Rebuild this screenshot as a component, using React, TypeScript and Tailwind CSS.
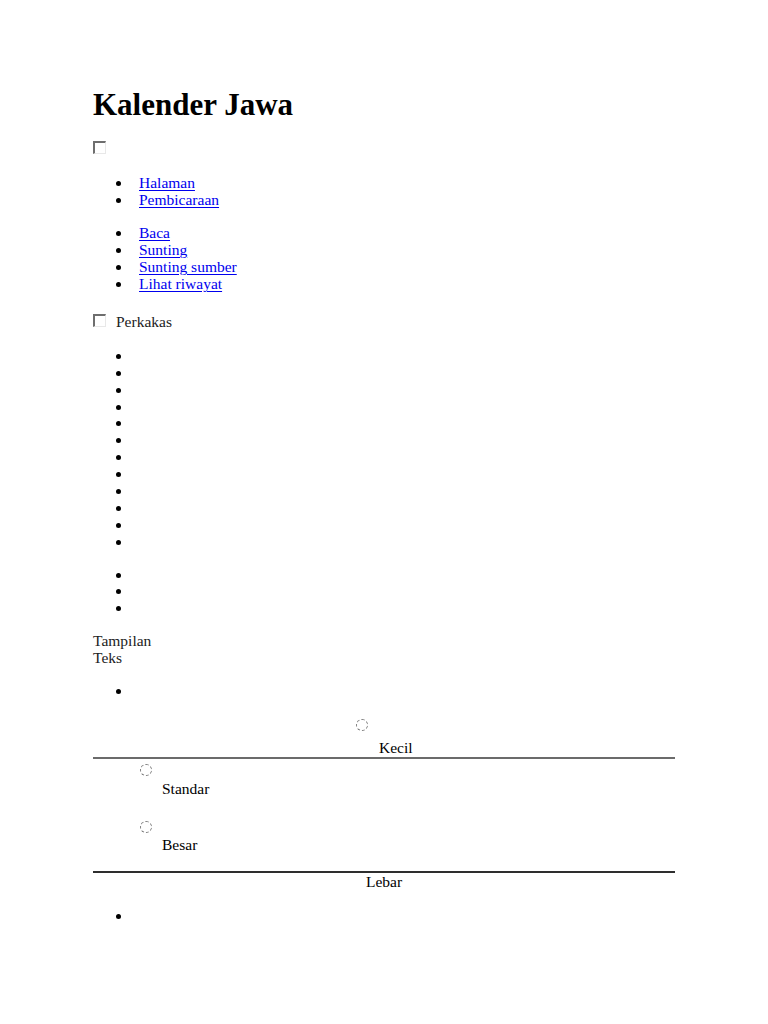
import React from "react";

const Bullet = ({ children }: { children?: React.ReactNode }) => (
  <li className="flex items-center h-[16.9px] leading-[16.9px]">
    <span className="ml-[23px] w-[5px] h-[5px] rounded-full bg-black shrink-0" />
    <span className="ml-[18px] whitespace-nowrap">{children}</span>
  </li>
);

const Link = ({ children }: { children: React.ReactNode }) => (
  <a href="#" className="text-[#0000ee] underline decoration-1 underline-offset-[2px]">
    {children}
  </a>
);

const Checkbox = () => (
  <div className="w-[13px] h-[13px] border-t-[2px] border-l-[2px] border-t-[#6e6e6e] border-l-[#6e6e6e] border-r border-b border-r-[#e8e8e8] border-b-[#e8e8e8] bg-white shrink-0" />
);

const Radio = ({ className }: { className: string }) => (
  <div className={"w-[12px] h-[12px] rounded-full border border-dashed border-[#7c7c7c] " + className} />
);

export default function App() {
  return (
    <div
      className="min-h-[1024px] bg-white text-black text-[15.5px] leading-[16.9px]"
      style={{ fontFamily: '"Liberation Serif", "Times New Roman", serif' }}
    >
      <div className="flow-root">
        <div className="ml-[93px] w-[582px]">
          <h1 className="mt-[87px] h-[36px] leading-[36px] text-[31px] font-bold whitespace-nowrap">
            Kalender Jawa
          </h1>
          <div className="mt-[18px]">
            <Checkbox />
          </div>
          <ul className="mt-[21px]">
            <Bullet><Link>Halaman</Link></Bullet>
            <Bullet><Link>Pembicaraan</Link></Bullet>
          </ul>
          <ul className="mt-[16.5px]">
            <Bullet><Link>Baca</Link></Bullet>
            <Bullet><Link>Sunting</Link></Bullet>
            <Bullet><Link>Sunting sumber</Link></Bullet>
            <Bullet><Link>Lihat riwayat</Link></Bullet>
          </ul>
          <div className="mt-[21.4px] flex items-start h-[16.9px]">
            <div className="mt-[-0.5px]">
              <Checkbox />
            </div>
            <span className="ml-[10px] text-[#222]">Perkakas</span>
          </div>
          <ul className="mt-[16.8px]">
            {Array.from({ length: 12 }).map((_, i) => (
              <Bullet key={i} />
            ))}
          </ul>
          <ul className="mt-[16px]">
            <Bullet />
            <Bullet />
            <Bullet />
          </ul>
          <div className="mt-[16px] text-[#222]">
            <div className="h-[16.9px]">Tampilan</div>
            <div className="h-[16.9px]">Teks</div>
          </div>
          <ul className="mt-[16px]">
            <Bullet />
          </ul>
          <Radio className="mt-[19.5px] ml-[263px]" />
          <div className="mt-[8.6px] ml-[286px] h-[16.9px]">Kecil</div>
          <div className="mt-[0.5px] h-[2px] bg-[#6b6b6b]" />
          <Radio className="mt-[4.5px] ml-[47px]" />
          <div className="mt-[5.5px] ml-[69px] h-[16.9px]">Standar</div>
          <Radio className="mt-[22.6px] ml-[47px]" />
          <div className="mt-[4.5px] ml-[69px] h-[16.9px]">Besar</div>
          <div className="mt-[16.6px] h-[2px] bg-[#2e2e2e]" />
          <div className="mt-[1px] h-[16.9px] text-center">Lebar</div>
          <ul className="mt-[17.6px]">
            <Bullet />
          </ul>
        </div>
      </div>
    </div>
  );
}
